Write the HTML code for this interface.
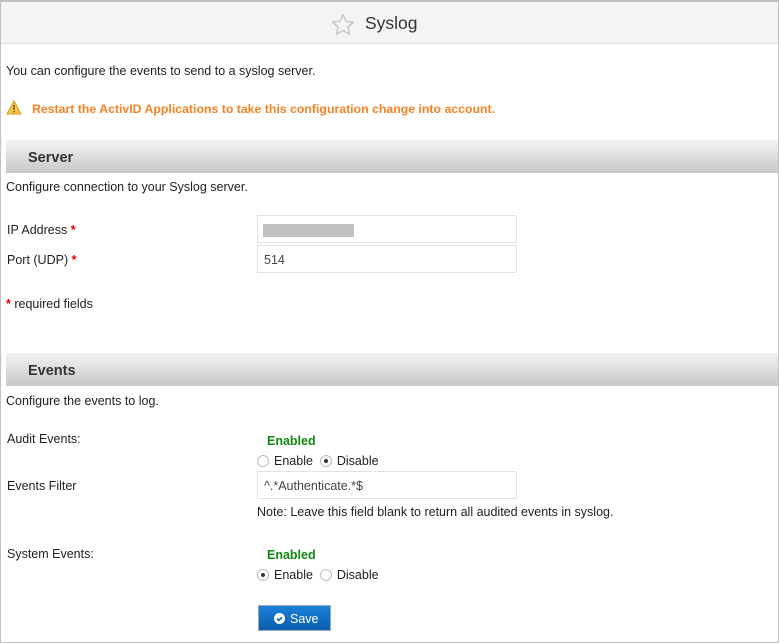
<!DOCTYPE html><html><head><meta charset="utf-8"><style>
body{margin:0;width:779px;height:643px;overflow:hidden;font-family:"Liberation Sans",Arial,sans-serif;font-size:12.5px;color:#222;background:#fff;position:relative}
.frame{position:absolute;left:0;top:0;width:777px;height:640px;border:1px solid #c0c0c0;border-top:2px solid #c0c0c0}
.a{position:absolute;white-space:nowrap}
.hdr{position:absolute;left:1px;top:2px;width:777px;height:41px;background:#f4f4f4;border-bottom:1px solid #ddd}
.bar{position:absolute;left:6px;width:772px;height:33px;background:linear-gradient(#f3f3f3,#c8c8c8)}
.bar span{position:absolute;left:22px;top:10px;font-size:14.5px;font-weight:bold;color:#333}
.inp{position:absolute;left:257px;width:258px;height:26px;border:1px solid #e2e2e2;background:#fff}
.inp span{position:absolute;left:6px;top:7px;color:#444}
.req{color:#e00;font-weight:bold}
.en{color:#118811;font-weight:bold}
.r{display:inline-block;width:10px;height:10px;border:1px solid #bbb;border-radius:50%;vertical-align:-2px;margin-right:5px;position:relative;background:#fff}
.r.on::after{content:"";position:absolute;left:3px;top:3px;width:4px;height:4px;border-radius:50%;background:#333}
</style></head><body>
<div class="frame"></div>
<div class="hdr"></div>
<svg class="a" style="left:331px;top:13px" width="24" height="24" viewBox="0 0 24 24"><path d="M12 1.5l3.1 7 7.4.6-5.6 4.9 1.7 7.4L12 17.5l-6.6 3.9 1.7-7.4L1.5 9.1l7.4-.6z" fill="none" stroke="#c8c8c8" stroke-width="1.5" stroke-linejoin="round"/></svg>
<div class="a" style="left:365px;top:13px;font-size:17.5px;color:#333">Syslog</div>
<div class="a" style="left:6px;top:64px">You can configure the events to send to a syslog server.</div>
<svg class="a" style="left:6px;top:100px" width="16" height="15" viewBox="0 0 16 15"><path d="M8 1L15 14H1z" fill="#f5c842" stroke="#d49a20" stroke-width="1"/><rect x="7.3" y="5" width="1.4" height="5" fill="#6a4a00"/><rect x="7.3" y="11" width="1.4" height="1.4" fill="#6a4a00"/></svg>
<div class="a" style="left:32px;top:102px;color:#f58225;font-weight:bold;font-size:12.3px">Restart the ActivID Applications to take this configuration change into account.</div>
<div class="bar" style="top:140px"><span>Server</span></div>
<div class="a" style="left:6px;top:180px">Configure connection to your Syslog server.</div>
<div class="a" style="left:7px;top:223px">IP Address <span class="req">*</span></div>
<div class="inp" style="top:215px"><div style="position:absolute;left:5px;top:8px;width:91px;height:13px;background:#c0c0c0"></div></div>
<div class="a" style="left:7px;top:253px">Port (UDP) <span class="req">*</span></div>
<div class="inp" style="top:245px"><span>514</span></div>
<div class="a" style="left:6px;top:297px"><span class="req">*</span> required fields</div>
<div class="bar" style="top:353px"><span>Events</span></div>
<div class="a" style="left:6px;top:394px">Configure the events to log.</div>
<div class="a" style="left:7px;top:432px">Audit Events:</div>
<div class="a en" style="left:267px;top:434px">Enabled</div>
<div class="a" style="left:257px;top:454px"><span class="r"></span>Enable &nbsp;<span class="r on"></span>Disable</div>
<div class="a" style="left:7px;top:479px">Events Filter</div>
<div class="inp" style="top:471px"><span>^.*Authenticate.*$</span></div>
<div class="a" style="left:257px;top:505px">Note: Leave this field blank to return all audited events in syslog.</div>
<div class="a" style="left:7px;top:547px">System Events:</div>
<div class="a en" style="left:267px;top:548px">Enabled</div>
<div class="a" style="left:257px;top:568px"><span class="r on"></span>Enable &nbsp;<span class="r"></span>Disable</div>
<div class="a" style="left:258px;top:605px;width:71px;height:24px;border:1px solid #9ab;background:linear-gradient(#1a82d8,#0a5cb0);color:#fff">
<svg style="position:absolute;left:15px;top:7px" width="11" height="11" viewBox="0 0 11 11"><circle cx="5.5" cy="5.5" r="5.5" fill="#fff"/><path d="M3 5.6l1.8 1.8L8 4.2" fill="none" stroke="#0a64b8" stroke-width="1.6"/></svg>
<span style="position:absolute;left:31px;top:6px">Save</span></div>
</body></html>
